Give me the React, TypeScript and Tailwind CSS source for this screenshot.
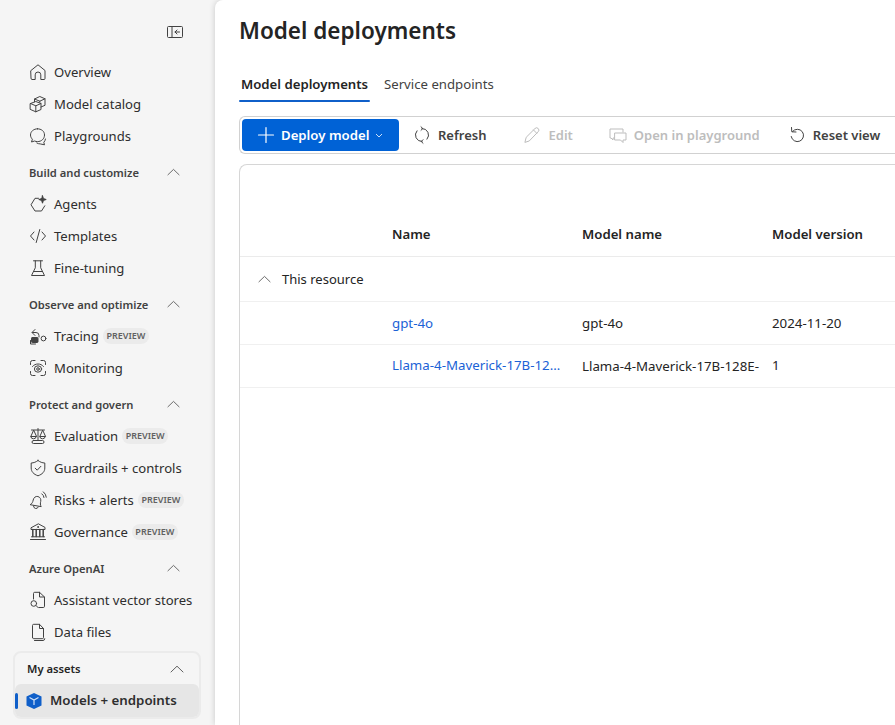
import React from "react";

type P = { children: React.ReactNode; size?: number; color?: string; className?: string };
const I = ({ children, size = 20, color = "#424242", className = "" }: P) => (
  <svg width={size} height={size} viewBox="0 0 20 20" fill="none" stroke={color} strokeWidth={1} strokeLinecap="round" strokeLinejoin="round" className={`shrink-0 ${className}`}>
    {children}
  </svg>
);

const Chevron = ({ color = "#616161", w = 13 }: { color?: string; w?: number }) => (
  <svg width={w} height={8} viewBox="0 0 14 8" fill="none" stroke={color} strokeWidth={1} strokeLinecap="round" strokeLinejoin="round" className="shrink-0">
    <path d="M1 7 7 1.200 13 7" />
  </svg>
);

const Home = () => <I><path d="M3 8.500 10 2.800l7 5.700V16.500a1 1 0 0 1-1 1H12.800v-4.700a2.800 2.800 0 0 0-5.600 0v4.700H4a1 1 0 0 1-1-1Z" /></I>;
const Catalog = () => <I><path d="M2.500 9.500 7.800 7.500l5.200 2V15.500L7.800 17.800 2.500 15.500Z" /><path d="M2.500 9.500 7.800 11.800 13 9.500M7.800 11.800v6" /><path d="M6.500 7.800V5L11.800 2.500 17 4.800v6.500L13 13" /><path d="M6.500 5l5.300 2.200L17 4.800M11.800 7.200v1" /></I>;
const Chat = () => <I><path d="M9.500 2.800c-3.900 0-7 2.700-7 6.200 0 1.600.7 3.100 1.900 4.200L3.500 16l3.100-1c.9.400 1.900.6 2.900.6 3.900 0 7-2.800 7-6.600s-3.100-6.200-7-6.200Z" /><path d="M8.800 17c1 .6 2.200.9 3.400.9l4.300.9-.7-2.500c.9-.9 1.500-2 1.700-3.300" /></I>;
const Agent = () => <I><path d="M10.500 4.300H7L3 10.800l4 6.200h6.500l3.300-5.200" /><path d="M14.500 1.800l.9 2.800 2.800.9-2.800.9-.9 2.800-.9-2.800-2.800-.9 2.800-.9Z" fill="#424242" /></I>;
const Code = () => <I><path d="M6 6 2.500 10 6 14M14 6l3.500 4L14 14M11.800 3.500 8.200 16.500" /></I>;
const Flask = () => <I><path d="M5.500 2.800h9M7.300 2.800v7L3.500 17.500h13L12.700 9.800v-7M6 13.500h8" /></I>;
const Tracing = () => <I><rect x="3.500" y="11.500" width="6.500" height="5" rx=".8" fill="#424242" /><path d="M2.500 14.500v3.500h5M4.500 6.500h3.500a3 3 0 0 1 3 3v1.500M7 3.500 4 6.500l3 3" /><circle cx="15.500" cy="12.500" r="2.400" /></I>;
const Monitor = () => <I><path d="M2.500 6.500V4.500a2 2 0 0 1 2-2H7M13 2.500h2.500a2 2 0 0 1 2 2v2M17.500 13.500v2a2 2 0 0 1-2 2H13M7 17.500H4.500a2 2 0 0 1-2-2v-2" /><path d="M4.500 8.500c1.400-1.600 3.300-2.500 5.500-2.500s4.100.9 5.500 2.500" /><ellipse cx="10" cy="11" rx="3.600" ry="3.200" /><circle cx="10" cy="11" r="1.300" /></I>;
const Scale = () => <I><path d="M3.500 4h13M10 2.500v12M5.500 14.500h9a1.500 1.500 0 0 1 0 3h-9a1.500 1.500 0 0 1 0-3Z" /><path d="M5.500 4.500 2.800 10.500h5.400ZM14.500 4.500 11.800 10.500h5.400ZM2.800 10.500a2.700 2.300 0 0 0 5.400 0M11.800 10.500a2.700 2.300 0 0 0 5.400 0" /></I>;
const Shield = () => <I><path d="M10 2.500c2 1.600 4.300 2.400 6.800 2.500V10c0 3.600-2.300 6.200-6.800 7.800C5.500 16.200 3.200 13.600 3.200 10V5C5.700 4.900 8 4.100 10 2.500Z" /><path d="m7.200 10.200 2 2 3.700-3.900" /></I>;
const Bell = () => <I><path d="M2.500 14.500c1.700-1 2.300-2.500 2.700-4.500.5-2.500 2.500-4 4.700-3.500 2.200.6 3.400 2.700 2.800 5-.4 1.700-.6 3.300.3 4.800Z" /><path d="M5.500 16a2.500 2.500 0 0 0 4.800 1M13.800 3.800a5 5 0 0 1 2.200 3.700M15.300 1.800a7.500 7.500 0 0 1 3 5.400" /></I>;
const Bank = () => <I><path d="M10 2 3 5.800v1.700h14V5.800Z" /><path d="M4.800 7.500v7M8.200 7.500v7M11.800 7.500v7M15.200 7.500v7" strokeWidth={1.500} /><path d="M3.500 14.800h13M2.500 17.500h15" /><circle cx="10" cy="5" r=".5" /></I>;
const FileSearch = () => <I><path d="M5.500 9V3.500a1.200 1.200 0 0 1 1.200-1.200H11.500L16.500 7v9.300a1.200 1.200 0 0 1-1.200 1.200H11" /><path d="M11.500 2.300V7h5" /><circle cx="5.800" cy="13.500" r="2.800" /><path d="m8 15.500 2.300 2.300" /></I>;
const Files = () => <I><path d="M4.500 15.500V3.500a1.200 1.200 0 0 1 1.200-1.200h5.800L15.500 6.500v9a1.200 1.200 0 0 1-1.200 1.200H5.700a1.200 1.200 0 0 1-1.200-1.200Z" /><path d="M11.500 2.300v4.200h4M6.500 18.500h8.500a1.800 1.800 0 0 0 1.800-1.800" /></I>;

const Preview = () => (
  <span className="ml-[4px] flex h-[16px] w-[46px] items-center justify-center rounded-full bg-[#ebebeb] text-[9px] font-semibold text-[#616161]">PREVIEW</span>
);

const Item = ({ icon, label, preview }: { icon: React.ReactNode; label: string; preview?: boolean }) => (
  <div className="flex h-8 items-center pl-[28px]">
    {icon}
    <span className="ml-[6px] pt-[2px] text-[13.100px] whitespace-nowrap text-[#2e2e2e]">{label}</span>
    {preview && <Preview />}
  </div>
);

const Section = ({ label }: { label: string }) => (
  <div className="mt-1 flex h-8 items-center justify-between pr-[35px] pl-[29px]">
    <span className="pt-[2px] text-[11.200px] font-semibold whitespace-nowrap text-[#424242]">{label}</span>
    <Chevron />
  </div>
);

const ToolBtn = ({ icon, label, disabled, className = "" }: { icon: React.ReactNode; label: string; disabled?: boolean; className?: string }) => (
  <div className={`flex items-center gap-[6px] ${className}`}>
    {icon}
    <span className={`pt-[2px] text-[13px] font-semibold whitespace-nowrap ${disabled ? "text-[#bdbdbd]" : "text-[#424242]"}`}>{label}</span>
  </div>
);

const cols = "grid grid-cols-[152px_190px_190px_1fr] items-center";

export default function App() {
  return (
    <div className="flex h-[725px] w-[895px] overflow-hidden bg-[#f5f5f5] font-['Noto_Sans','Open_Sans',sans-serif]">
      <aside className="flex w-[215px] shrink-0 flex-col">
        <div className="flex h-[56px] justify-end pt-[26px] pr-[32px]">
          <svg width="16" height="12" viewBox="0 0 16 12" fill="none" stroke="#424242" strokeWidth={1}>
            <rect x=".5" y=".5" width="15" height="11" rx="1" />
            <path d="M5 .5v11" />
            <path d="M12.500 6H8M10 4 8 6l2 2" strokeLinecap="round" strokeLinejoin="round" />
          </svg>
        </div>
        <Item icon={<Home />} label="Overview" />
        <Item icon={<Catalog />} label="Model catalog" />
        <Item icon={<Chat />} label="Playgrounds" />
        <Section label="Build and customize" />
        <Item icon={<Agent />} label="Agents" />
        <Item icon={<Code />} label="Templates" />
        <Item icon={<Flask />} label="Fine-tuning" />
        <Section label="Observe and optimize" />
        <Item icon={<Tracing />} label="Tracing" preview />
        <Item icon={<Monitor />} label="Monitoring" />
        <Section label="Protect and govern" />
        <Item icon={<Scale />} label="Evaluation" preview />
        <Item icon={<Shield />} label="Guardrails + controls" />
        <Item icon={<Bell />} label="Risks + alerts" preview />
        <Item icon={<Bank />} label="Governance" preview />
        <Section label="Azure OpenAI" />
        <Item icon={<FileSearch />} label="Assistant vector stores" />
        <Item icon={<Files />} label="Data files" />
        <div className="mt-[3px] ml-[13px] w-[188px] rounded-lg border-2 border-[#ebebeb]">
          <div className="flex h-[31px] items-center justify-between pr-[15px] pl-[12px]">
            <span className="pt-[2px] text-[11.200px] font-semibold text-[#242424]">My assets</span>
            <Chevron w={14} />
          </div>
          <div className="flex h-[33px] items-center rounded-md bg-[#e6e6e6]">
            <span className="h-[16px] w-[3px] rounded-full bg-[#0f5fc9]" />
            <svg width="18" height="18" viewBox="0 0 18 18" className="ml-[7px] shrink-0">
              <path d="M9 1 16.500 4.500v9L9 17l-7.500-3.500v-9Z" fill="#0f5fc9" />
              <path d="M4.500 5.500 9 8l4.500-2.500M9 8v5" fill="none" stroke="#cfe0f7" strokeWidth={1.200} />
            </svg>
            <span className="ml-[7px] text-[13.300px] font-semibold whitespace-nowrap text-[#2e2e2e]">Models + endpoints</span>
          </div>
        </div>
      </aside>

      <main className="flex flex-1 flex-col overflow-hidden rounded-tl-lg bg-white pl-[24px] shadow-[0_0_6px_rgba(0,0,0,0.18)]">
        <h1 className="mt-[15px] h-[32px] text-[22.500px] leading-[32px] font-semibold text-[#242424]">Model deployments</h1>
        <div className="mt-[22px] flex h-[33px]">
          <div className="flex w-[131px] flex-col items-center">
            <span className="flex h-[31px] items-center text-[13.200px] font-semibold whitespace-nowrap text-[#242424]">Model deployments</span>
            <span className="h-[2px] w-full rounded-full bg-[#0f5fc9]" />
          </div>
          <span className="ml-[14px] flex h-[31px] items-center text-[13.200px] whitespace-nowrap text-[#424242]">Service endpoints</span>
        </div>
        <div className="mt-[14px] flex h-[38px] w-[720px] shrink-0 items-center rounded-l-md border border-r-0 border-[#d1d1d1] pl-[2px]">
          <div className="flex h-[32px] w-[157px] items-center rounded-[4px] bg-[#0062d6] pl-[14px]">
            <svg width="20" height="20" viewBox="0 0 20 20" stroke="white" strokeWidth={1.200} strokeLinecap="round"><path d="M10 2.500v15M2.500 10h15" /></svg>
            <span className="ml-[5px] pt-[2px] text-[13.200px] font-semibold whitespace-nowrap text-white">Deploy model</span>
            <svg width="10" height="10" viewBox="0 0 10 10" fill="none" stroke="white" strokeWidth={0.800} className="ml-[5px]"><path d="M2 4l3 3 3-3" /></svg>
          </div>
          <ToolBtn className="ml-[13px]" label="Refresh" icon={<I><path d="M10 3.500a6.500 6.500 0 0 1 5 10.700M10 16.500a6.500 6.500 0 0 1-5-10.700" /><path d="M9 1.800 10.800 3.500 9 5.300M11 14.700 9.200 16.500 11 18.200" /></I>} />
          <ToolBtn className="ml-[36px]" disabled label="Edit" icon={<I color="#bdbdbd"><path d="M3 17 4.200 12.300 13 3.500a2.200 2.200 0 0 1 3.200 3.200L7.500 15.700ZM11.500 5l3.200 3.200" /></I>} />
          <ToolBtn className="ml-[35px]" disabled label="Open in playground" icon={<I color="#bdbdbd"><path d="M6 13H5v2l-2-2H2V4h13v3" /><path d="M7 8h11v7h-3v2.500L12.500 15H7Z" /></I>} />
          <ToolBtn className="ml-[27px]" label="Reset view" icon={<I><path d="M5.500 6.500a6.200 6.200 0 1 1-1.300 5" /><path d="M4.500 2.500 4.800 6.800 9 7" /></I>} />
        </div>
        <div className="mt-[10px] w-[720px] flex-1 rounded-tl-lg border border-r-0 border-b-0 border-[#d6d6d6]">
          <div className={`${cols} h-[92px] border-b border-[#ebebeb] pt-[48px]`}>
            <span />
            <span className="text-[13.200px] font-semibold text-[#242424]">Name</span>
            <span className="text-[13.200px] font-semibold text-[#242424]">Model name</span>
            <span className="text-[13.200px] font-semibold text-[#242424]">Model version</span>
          </div>
          <div className="flex h-[45px] items-center border-b border-[#f0f0f0] pl-[18px]">
            <Chevron />
            <span className="ml-[11px] pt-[2px] text-[13px] text-[#242424]">This resource</span>
          </div>
          <div className={`${cols} h-[43px] border-b border-[#f0f0f0] pt-[2px] text-[13.300px] text-[#242424]`}>
            <span />
            <span className="text-[#1a62d6]">gpt-4o</span>
            <span>gpt-4o</span>
            <span>2024-11-20</span>
          </div>
          <div className={`${cols} h-[43px] border-b border-[#f0f0f0] text-[13.300px] text-[#242424]`}>
            <span />
            <span className="truncate pr-[18px] text-[#1a62d6]">Llama-4-Maverick-17B-128E-Instruct</span>
            <span className="h-[20px] overflow-hidden pr-[6px] leading-[20px]">Llama-4-Maverick-17B-128E-Instruct</span>
            <span>1</span>
          </div>
        </div>
      </main>
    </div>
  );
}
